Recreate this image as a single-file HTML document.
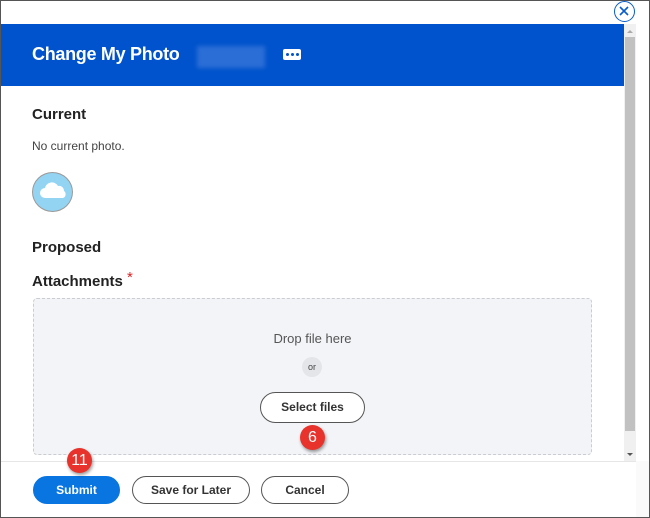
<!DOCTYPE html>
<html><head><style>
*{box-sizing:border-box;margin:0;padding:0}
body{width:650px;height:518px;overflow:hidden;background:#fff;font-family:"Liberation Sans",sans-serif;position:relative}
.frame{position:absolute;left:0;top:0;width:650px;height:518px;border:1px solid #555}
.hdr{position:absolute;left:1px;top:24px;width:623px;height:62px;background:#0053cc}
.hdr h1{position:absolute;left:31px;top:20px;color:#fff;font-size:18px;font-weight:bold;letter-spacing:-0.3px}
.blur{position:absolute;left:196px;top:22px;width:68px;height:22px;background:#2a6ed6;filter:blur(2px)}
.dots{position:absolute;left:283px;top:49px;width:18px;height:11px;background:#fff;border-radius:2px}
.dots i{position:absolute;top:4px;width:3px;height:3px;background:#0053cc;border-radius:50%}
.sb{position:absolute;left:624px;top:24px;width:12px;height:437px;background:#f0f0f0}
.thumb{position:absolute;left:625px;top:37px;width:10px;height:394px;background:#c1c1c1}
.close{position:absolute;left:614px;top:1px;width:21px;height:21px;border:1.5px solid #0a5ec9;border-radius:50%;background:#fff}
.t{position:absolute;color:#222}
h2{font-size:15px;font-weight:bold}
.drop{position:absolute;left:33px;top:298px;width:559px;height:157px;background:#f2f4f7;border:1px dashed #c9ccd0;border-radius:4px}
.btn{position:absolute;height:28px;border:1px solid #555;border-radius:14px;background:#fff;font-size:12px;font-weight:bold;text-align:center;line-height:26px;color:#333}
.badge{position:absolute;width:25px;height:25px;border-radius:50%;background:#e8322c;color:#fff;font-size:16px;text-align:center;line-height:25px;box-shadow:1px 2px 3px rgba(0,0,0,.4)}
.foot{position:absolute;left:1px;top:461px;width:635px;border-top:1px solid #e6e6e6}
</style></head><body>
<div class="frame"></div>
<div class="hdr"><h1>Change My Photo</h1><div class="blur"></div></div>
<div class="dots"><i style="left:3px"></i><i style="left:8px"></i><i style="left:13px"></i></div>
<div class="sb"></div><div class="thumb"></div>
<div style="position:absolute;left:627px;top:30px;width:0;height:0;border:3px solid transparent;border-bottom-color:#aaa;border-top:0"></div>
<div style="position:absolute;left:627px;top:453px;width:0;height:0;border:3px solid transparent;border-top-color:#555;border-bottom:0"></div>
<div class="close"><svg width="18" height="18" viewBox="0 0 18 18" style="position:absolute;left:0;top:0"><path d="M5 5L13 13M13 5L5 13" stroke="#0a5ec9" stroke-width="1.6"/></svg></div>
<div class="t" style="left:32px;top:106px"><h2>Current</h2></div>
<div class="t" style="left:32px;top:139px;font-size:12px;color:#444">No current photo.</div>
<div style="position:absolute;left:32px;top:172px;width:41px;height:40px;border-radius:50%;background:#93d4f2;border:1px solid #999"></div>
<svg style="position:absolute;left:37px;top:181px" width="32" height="20" viewBox="0 0 32 20"><path d="M8 17 a5 5 0 0 1 0-10 a7 7 0 0 1 13-2 a5 5 0 0 1 6 5 a4 4 0 0 1 -1 7z" fill="#fff"/></svg>
<div class="t" style="left:32px;top:239px"><h2>Proposed</h2></div>
<div class="t" style="left:32px;top:273px"><h2>Attachments <span style="color:#d22;font-weight:normal;position:relative;top:-4px">*</span></h2></div>
<div class="drop"></div>
<div class="t" style="left:0;width:625px;text-align:center;top:331px;font-size:13px;color:#555">Drop file here</div>
<div style="position:absolute;left:302px;top:357px;width:20px;height:20px;border-radius:50%;background:#e3e5e8;font-size:9px;color:#444;text-align:center;line-height:20px">or</div>
<div class="btn" style="left:260px;top:392px;width:105px;height:31px;line-height:29px;border-radius:16px">Select files</div>
<div class="badge" style="left:300px;top:425px">6</div>
<div class="foot"></div>
<div style="position:absolute;left:636px;top:461px;width:13px;height:56px;background:#fafafa"></div>
<div class="btn" style="left:33px;top:476px;width:87px;background:#0875e1;border-color:#0875e1;color:#fff">Submit</div>
<div class="btn" style="left:132px;top:476px;width:118px">Save for Later</div>
<div class="btn" style="left:261px;top:476px;width:88px">Cancel</div>
<div class="badge" style="left:67px;top:448px">11</div>
</body></html>
